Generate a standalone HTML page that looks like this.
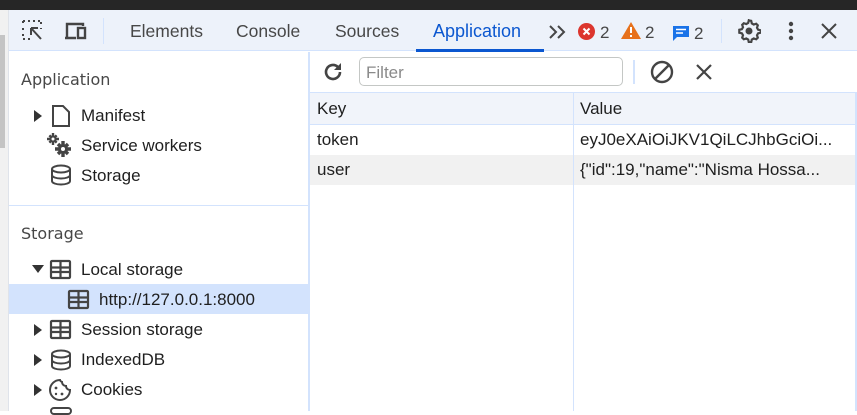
<!DOCTYPE html>
<html><head><style>
*{margin:0;padding:0;box-sizing:border-box}
body{width:857px;height:411px;overflow:hidden;background:#fff;font-family:"Liberation Sans",sans-serif;color:#1f1f1f;position:relative}
.a{position:absolute}
.t{font-size:17px;white-space:nowrap}
.tb{font-size:17.5px}
svg{position:absolute}
</style></head><body>
<div class="a" style="left:0;top:0;width:857px;height:10px;background:#262626"></div>
<div class="a" style="left:0;top:10px;width:9px;height:401px;background:#f1f1f1;border-right:1px solid #dfe3ea"></div>
<div class="a" style="left:0;top:35px;width:5px;height:113px;background:#c4c4c4"></div>
<div class="a" style="left:9px;top:10px;width:848px;height:41px;background:#edf2fa;border-bottom:1px solid #d3e3fd"></div>
<svg style="left:22px;top:19px" width="24" height="24" viewBox="0 0 24 24" fill="none" stroke="#444" stroke-width="2"><path d="M1 2h2M6 2h2M11 2h2M16 2h3v3M1 2v3M1 9v2M1 15v2M1 20h2M6 20h2M19 9v1" stroke-dasharray="2 2"/><path d="M9 9l10 11M9 9h7M9 9v7"/></svg>
<svg style="left:63px;top:21px" width="26" height="20" viewBox="0 0 26 20" fill="none" stroke="#444" stroke-width="2.4"><path d="M2 17h11M4 17V3h16v2"/><rect x="15" y="7" width="7" height="10"/></svg>
<div class="a" style="left:103px;top:18px;width:1px;height:26px;background:#d3e3fd"></div>
<div class="a t tb" style="left:130px;top:21px;color:#474747">Elements</div>
<div class="a t tb" style="left:236px;top:21px;color:#474747">Console</div>
<div class="a t tb" style="left:335px;top:21px;color:#474747">Sources</div>
<div class="a t tb" style="left:433px;top:21px;color:#0b57d0;font-size:18px">Application</div>
<div class="a" style="left:416px;top:49px;width:128px;height:3px;background:#0b57d0"></div>
<svg style="left:548px;top:25px" width="20" height="14" fill="none" stroke="#474747" stroke-width="2"><path d="M2 1l6 6-6 6M10 1l6 6-6 6"/></svg>
<svg style="left:578px;top:23px" width="17" height="17" viewBox="0 0 17 17"><circle cx="8.5" cy="8.5" r="8.5" fill="#dc362e"/><path d="M5.5 5.5l6 6M11.5 5.5l-6 6" stroke="#fff" stroke-width="2"/></svg>
<div class="a t" style="left:600px;top:23px;color:#474747">2</div>
<svg style="left:621px;top:22px" width="20" height="17" viewBox="0 0 20 17"><path d="M10 0L20 17H0z" fill="#e7711b"/><path d="M10 5v6M10 13v2" stroke="#fff" stroke-width="2"/></svg>
<div class="a t" style="left:645px;top:23px;color:#474747">2</div>
<svg style="left:673px;top:25px" width="16" height="16" viewBox="0 0 16 16"><path d="M0 1h16v11H4l-4 4z" fill="#1a73e8"/><path d="M3 4.5h10M3 8h7" stroke="#fff" stroke-width="1.6"/></svg>
<div class="a t" style="left:694px;top:24px;color:#474747">2</div>
<div class="a" style="left:721px;top:19px;width:1px;height:24px;background:#d3e3fd"></div>
<svg style="left:737px;top:19px" width="24" height="24" viewBox="0 0 24 24"><path d="M12 1.5l2.2.3.6 2.6 1.9 1.1 2.5-.8 1.6 1.6-.8 2.5 1.1 1.9 2.6.6v2.4l-2.6.6-1.1 1.9.8 2.5-1.6 1.6-2.5-.8-1.9 1.1-.6 2.6h-2.4l-.6-2.6-1.9-1.1-2.5.8-1.6-1.6.8-2.5-1.1-1.9-2.6-.6V10.8l2.6-.6 1.1-1.9-.8-2.5 1.6-1.6 2.5.8 1.9-1.1.6-2.6z" fill="none" stroke="#444" stroke-width="2.2"/><circle cx="12" cy="12" r="3.5" fill="#444"/></svg>
<svg style="left:787px;top:21px" width="8" height="20"><circle cx="4" cy="3" r="2.2" fill="#444"/><circle cx="4" cy="10" r="2.2" fill="#444"/><circle cx="4" cy="17" r="2.2" fill="#444"/></svg>
<svg style="left:821px;top:23px" width="16" height="16"><path d="M1 1l14 14M15 1L1 15" stroke="#444" stroke-width="2"/></svg>
<div class="a" style="left:308px;top:52px;width:2px;height:359px;background:#d3e3fd"></div>
<div class="a t" style="left:21px;top:70px;color:#474747;font-family:'DejaVu Sans',sans-serif;font-size:16px">Application</div>
<svg style="left:34px;top:110px" width="8" height="12"><path d="M0 0l8 6-8 6z" fill="#333"/></svg>
<svg style="left:51px;top:105px" width="20" height="22"><path d="M2 1h10l6 6v14H2z" fill="none" stroke="#444" stroke-width="2"/></svg>
<div class="a t" style="left:81px;top:106px">Manifest</div>
<svg style="left:47px;top:133px" width="28" height="26" viewBox="0 0 28 26"><g fill="#444"><circle cx="6" cy="6" r="3.6"/><path d="M4.8 0h2.4v12H4.8zM0 4.8h12v2.4H0zM1.5 3.2l1.7-1.7 7.3 7.3-1.7 1.7zM8.8 1.5l1.7 1.7-7.3 7.3-1.7-1.7z"/><circle cx="16" cy="16" r="5"/><path d="M14.3 8h3.4v16h-3.4zM8 14.3h16v3.4H8zM9.8 12.2l2.4-2.4 10 10-2.4 2.4zM19.8 9.8l2.4 2.4-10 10-2.4-2.4z"/></g><circle cx="6" cy="6" r="1.5" fill="#fff"/><circle cx="16" cy="16" r="2" fill="#fff"/></svg>
<div class="a t" style="left:81px;top:136px">Service workers</div>
<svg style="left:50px;top:164px" width="22" height="22" viewBox="0 0 22 22" fill="none" stroke="#444" stroke-width="2"><ellipse cx="11" cy="5" rx="9" ry="3.5"/><path d="M2 5v12c0 2 4 3.5 9 3.5s9-1.5 9-3.5V5M2 11c0 2 4 3.5 9 3.5s9-1.5 9-3.5"/></svg>
<div class="a t" style="left:81px;top:166px">Storage</div>
<div class="a" style="left:9px;top:205px;width:299px;height:1px;background:#d3e3fd"></div>
<div class="a t" style="left:21px;top:224px;color:#474747;font-family:'DejaVu Sans',sans-serif;font-size:16px">Storage</div>
<svg style="left:32px;top:265px" width="12" height="8"><path d="M0 0h12L6 8z" fill="#333"/></svg>
<div class="a" style="left:9px;top:284px;width:299px;height:30px;background:#d3e3fd"></div>
<svg style="left:0;top:0" width="300" height="411"><g fill="none" stroke="#444" stroke-width="2.2"><g><rect x="51" y="261" width="19" height="17" rx="1"/><path d="M51 267.5h19M51 272h19M60.5 261v17"/></g><g transform="translate(18 30)"><rect x="51" y="261" width="19" height="17" rx="1"/><path d="M51 267.5h19M51 272h19M60.5 261v17"/></g><g transform="translate(0 60)"><rect x="51" y="261" width="19" height="17" rx="1"/><path d="M51 267.5h19M51 272h19M60.5 261v17"/></g></g></svg>
<div class="a t" style="left:81px;top:260px">Local storage</div>
<div class="a t" style="left:99px;top:290px">http://127.0.0.1:8000</div>
<svg style="left:34px;top:324px" width="8" height="12"><path d="M0 0l8 6-8 6z" fill="#333"/></svg>
<div class="a t" style="left:81px;top:320px">Session storage</div>
<svg style="left:34px;top:354px" width="8" height="12"><path d="M0 0l8 6-8 6z" fill="#333"/></svg>
<svg style="left:50px;top:349px" width="22" height="22" viewBox="0 0 22 22" fill="none" stroke="#444" stroke-width="2"><ellipse cx="11" cy="5" rx="9" ry="3.5"/><path d="M2 5v12c0 2 4 3.5 9 3.5s9-1.5 9-3.5V5M2 11c0 2 4 3.5 9 3.5s9-1.5 9-3.5"/></svg>
<div class="a t" style="left:81px;top:350px">IndexedDB</div>
<svg style="left:34px;top:384px" width="8" height="12"><path d="M0 0l8 6-8 6z" fill="#333"/></svg>
<svg style="left:48px;top:378px" width="24" height="24" viewBox="0 0 24 24"><path d="M12 2a10 10 0 1 0 10 10 4 4 0 0 1-4-4 4 4 0 0 1-4-4 3 3 0 0 1-2-2z" fill="none" stroke="#444" stroke-width="2"/><circle cx="8" cy="10" r="1.4" fill="#444"/><circle cx="14" cy="16" r="1.4" fill="#444"/><circle cx="8" cy="16" r="1.2" fill="#444"/></svg>
<div class="a t" style="left:81px;top:380px">Cookies</div>
<div class="a" style="left:50px;top:407px;width:22px;height:8px;border:2px solid #444;border-radius:10px"></div>
<svg style="left:321px;top:60px" width="24" height="24" viewBox="0 0 24 24"><path d="M19 12a7 7 0 1 1-2.2-5.1" fill="none" stroke="#444" stroke-width="2.6"/><path d="M20 3v7h-7z" fill="#444"/></svg>
<div class="a" style="left:359px;top:57px;width:264px;height:29px;border:1px solid #c4c7c5;border-radius:5px"></div>
<div class="a t" style="left:366px;top:63px;color:#8a8a8a">Filter</div>
<div class="a" style="left:633px;top:60px;width:2px;height:24px;background:#d3e3fd"></div>
<svg style="left:650px;top:60px" width="24" height="24"><circle cx="12" cy="12" r="10" fill="none" stroke="#444" stroke-width="2.4"/><path d="M5 19L19 5" stroke="#444" stroke-width="2.4"/></svg>
<svg style="left:696px;top:64px" width="16" height="16"><path d="M1 1l14 14M15 1L1 15" stroke="#444" stroke-width="2.2"/></svg>
<div class="a" style="left:310px;top:92px;width:547px;height:33px;background:#f1f4fa;border-top:1px solid #d3e3fd;border-bottom:1px solid #d3e3fd"></div>
<div class="a" style="left:310px;top:155px;width:545px;height:30px;background:#f1f1f1"></div>
<div class="a" style="left:573px;top:92px;width:1px;height:319px;background:#d3e3fd"></div>
<div class="a" style="left:855px;top:92px;width:2px;height:319px;background:#d3e3fd"></div>
<div class="a t" style="left:317px;top:99px">Key</div>
<div class="a t" style="left:580px;top:99px">Value</div>
<div class="a t" style="left:317px;top:130px">token</div>
<div class="a t" style="left:580px;top:130px">eyJ0eXAiOiJKV1QiLCJhbGciOi...</div>
<div class="a t" style="left:317px;top:160px">user</div>
<div class="a t" style="left:580px;top:160px">{"id":19,"name":"Nisma Hossa...</div>
</body></html>
